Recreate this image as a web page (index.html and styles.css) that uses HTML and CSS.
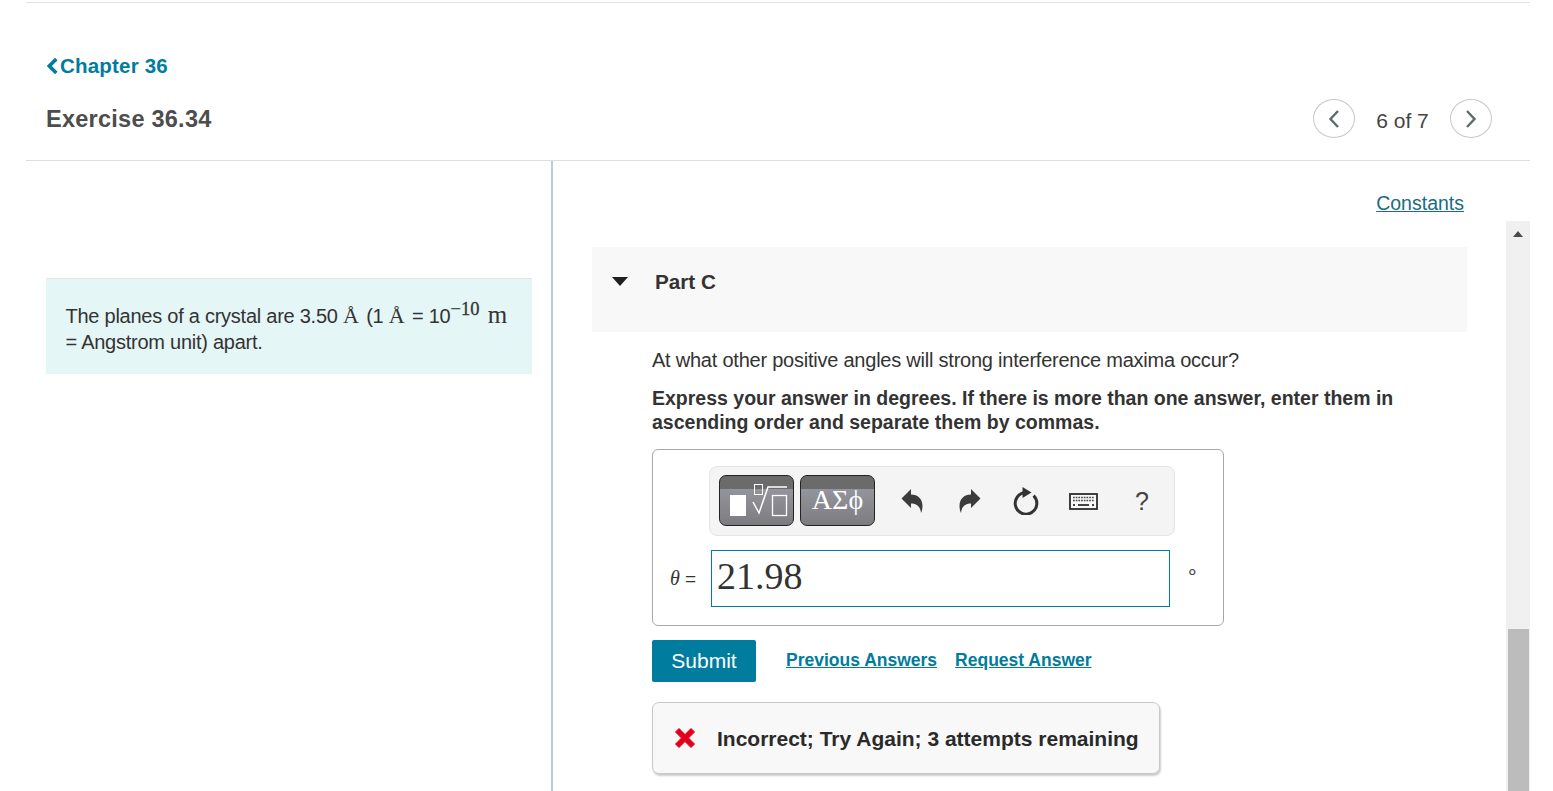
FILE: index.html
```html
<!DOCTYPE html>
<html>
<head>
    <title>Exercise 36.34</title>
    <link rel="stylesheet" href="styles.css">
</head>
<body>
    <div class="page">
        <header class="top">
            <a class="back" href="#">
                <svg width="14" height="18" viewBox="0 0 14 18"><path d="M10.300 2 L3.300 9 L10.300 16" fill="none" stroke="#007c9e" stroke-width="3.600"/></svg>
                Chapter 36
            </a>
            <div class="title-row">
                <h1>Exercise 36.34</h1>
                <div class="pager">
                    <span class="round">
                        <svg width="12" height="20" viewBox="0 0 12 20"><path d="M10 2 L2.500 10 L10 18" fill="none" stroke="#5f6b6b" stroke-width="2.400"/></svg>
                    </span>
                    <span class="count">6 of 7</span>
                    <span class="round">
                        <svg width="12" height="20" viewBox="0 0 12 20"><path d="M2 2 L9.500 10 L2 18" fill="none" stroke="#5f6b6b" stroke-width="2.400"/></svg>
                    </span>
                </div>
            </div>
        </header>

        <div class="columns">
            <aside class="left">
                <div class="intro">
                    The planes of a crystal are 3.50 <span class="tex angstrom">Å</span> (1 <span class="tex angstrom">Å</span> = 10<sup class="tex">−10</sup> <span class="tex unit">m</span>
                    = Angstrom unit) apart.
                </div>
            </aside>

            <main class="right">
                <div class="constants"><a href="#">Constants</a></div>
                <div class="scroll-area">
                    <div class="scroll-content">
                        <div class="part-head">
                            <span class="caret"></span>
                            <span class="part-name">Part C</span>
                        </div>
                        <div class="part-body">
                            <p class="question">At what other positive angles will strong interference maxima occur?</p>
                            <p class="instructions">Express your answer in degrees. If there is more than one answer, enter them in ascending order and separate them by commas.</p>

                            <div class="answer-box">
                                <div class="toolbar">
                                    <span class="tool-btn">
                                        <svg width="73" height="49" viewBox="1 1 73 49">
                                            <rect x="11" y="20" width="16" height="21" fill="#fff"/>
                                            <rect x="35.500" y="9.500" width="8" height="10" fill="none" stroke="#fff"/>
                                            <path d="M34 27 L40 38 L49 12 H68" fill="none" stroke="#fff" stroke-width="1.500"/>
                                            <rect x="53.500" y="20.500" width="14" height="20" fill="none" stroke="#fff" stroke-width="1.300"/>
                                        </svg>
                                    </span>
                                    <span class="tool-btn greek">ΑΣϕ</span>
                                    <svg class="tool-icon undo" width="22" height="26" viewBox="0 0 22 26"><path d="M0.500 10.500 L10 1 V6.500 C17 6.500 21.500 11 21.500 18 C21.500 20.500 21 23 20 25 C19.500 19.500 16.500 15.500 10 15.500 V20 Z" fill="#3c3c3c"/></svg>
                                    <svg class="tool-icon redo" width="22" height="26" viewBox="0 0 22 26"><path d="M21.500 10.500 L12 1 V6.500 C5 6.500 0.500 11 0.500 18 C0.500 20.500 1 23 2 25 C2.500 19.500 5.500 15.500 12 15.500 V20 Z" fill="#3c3c3c"/></svg>
                                    <svg class="tool-icon reset" width="27" height="28" viewBox="0 0 27 28"><path d="M13 5.500 A10.800 10.800 0 1 0 20.600 8.600" fill="none" stroke="#333" stroke-width="3"/><path d="M9.500 0 L18.500 5.500 L9.500 11 Z" fill="#333"/></svg>
                                    <svg class="tool-icon keys" width="29" height="17" viewBox="0 0 29 17">
                                        <rect x="1" y="1" width="27" height="15" fill="#f8f8f8" stroke="#2c2c2c" stroke-width="1.800"/>
                                        <path d="M4 4.500 H25 M4 7.500 H25" stroke="#444" stroke-width="1.500" stroke-dasharray="1.700 1"/>
                                        <path d="M4 12 H6 M9 12 H20 M23 12 H25" stroke="#444" stroke-width="1.800"/>
                                    </svg>
                                    <span class="help">?</span>
                                </div>
                                <div class="input-row">
                                    <span class="label"><i>θ</i> =</span>
                                    <div class="answer-input">21.98</div>
                                    <span class="degree">∘</span>
                                </div>
                            </div>

                            <div class="actions">
                                <button class="submit">Submit</button>
                                <a class="action-link first" href="#">Previous Answers</a>
                                <a class="action-link" href="#">Request Answer</a>
                            </div>

                            <div class="feedback">
                                <svg width="24" height="24" viewBox="0 0 24 24"><path d="M2.500 6 L6 2.500 L12 8.500 L18 2.500 L21.500 6 L15.500 12 L21.500 18 L18 21.500 L12 15.500 L6 21.500 L2.500 18 L8.500 12 Z" fill="#e2001a" stroke="#e2001a" stroke-linejoin="round"/></svg>
                                <span>Incorrect; Try Again; 3 attempts remaining</span>
                            </div>
                        </div>
                    </div>
                    <div class="scrollbar">
                        <div class="scroll-track"><span class="scroll-up"></span></div>
                        <div class="scroll-thumb"></div>
                    </div>
                </div>
            </main>
        </div>
    </div>
</body>
</html>
```

FILE: styles.css
```css
html, body {
    height: 100%;
}
body {
    font-family: "Liberation Sans", Arial, sans-serif;
    color: #333;
    background-color: #fff;
    margin: 0;
    overflow: hidden;
}
p {
    margin: 0;
}
a {
    color: #007c9e;
}
.page {
    width: 1504px;
    height: 791px;
    margin-left: 26px;
    border-top: 1px solid #e2e2e2;
    margin-top: 2px;
    overflow: hidden;
}
.top {
    height: 157px;
    padding: 0 38px 0 20px;
    border-bottom: 1px solid #dedede;
}
.back {
    display: flex;
    align-items: center;
    padding-top: 51px;
    height: 24px;
    font-size: 20.500px;
    font-weight: bold;
    color: #007c9e;
    text-decoration: none;
    letter-spacing: 0.200px;
}
.title-row {
    display: flex;
    justify-content: space-between;
    align-items: center;
    margin-top: 21px;
}
h1 {
    margin: 0;
    font-size: 23.500px;
    line-height: 30px;
    color: #4d4d4d;
    letter-spacing: 0.250px;
}
.pager {
    display: flex;
    align-items: center;
    font-size: 21px;
    color: #444;
}
.count {
    width: 95px;
    text-align: center;
    padding-top: 5px;
}
.round {
    width: 40px;
    height: 37px;
    border: 1px solid #c8c8c8;
    border-radius: 50%;
    display: flex;
    align-items: center;
    justify-content: center;
}
.columns {
    display: flex;
}
.left {
    width: 527px;
    height: 630px;
    border-right: 2px solid #b9cde0;
    padding: 117px 0 0 20px;
    box-sizing: border-box;
    flex: none;
}
.intro {
    width: 486px;
    height: 96px;
    box-sizing: border-box;
    background-color: #e5f6f7;
    border-top: 1px solid #dde8e8;
    padding: 23px 19px 0 19.500px;
    font-size: 20px;
    line-height: 26px;
    letter-spacing: -0.250px;
}
.tex {
    font-family: "Liberation Serif", serif;
    font-size: 22px;
    letter-spacing: 0;
}
.angstrom {
    margin-right: 2px;
}
sup.tex {
    font-size: 18.500px;
    line-height: 0;
    vertical-align: 8px;
    -webkit-text-stroke: 0.300px #333;
}
.unit {
    font-size: 25px;
    margin-left: 3px;
}
.right {
    flex: 1;
    min-width: 0;
}
.constants {
    height: 60px;
    padding: 29px 66px 0 0;
    box-sizing: border-box;
    text-align: right;
    font-size: 19.500px;
    line-height: 26px;
}
.constants a {
    color: #1b6b82;
}
.scroll-area {
    display: flex;
}
.scroll-content {
    flex: 1;
    padding: 26px 39px 0 39px;
}
.scrollbar {
    width: 24px;
    height: 570px;
    flex: none;
    display: flex;
    flex-direction: column;
    background-color: #f0f0f0;
}
.scroll-track {
    height: 408px;
    display: flex;
    justify-content: center;
    padding-top: 10px;
    box-sizing: border-box;
    flex: none;
}
.scroll-up {
    width: 0;
    height: 0;
    border-left: 5.500px solid transparent;
    border-right: 5.500px solid transparent;
    border-bottom: 6px solid #4c4c4c;
}
.scroll-thumb {
    flex: 1;
    margin: 0 1px 0 2px;
    background-color: #bcbcbc;
}
.part-head {
    height: 85px;
    background-color: #f8f8f8;
    display: flex;
    align-items: flex-start;
    padding: 22px 0 0 20px;
    box-sizing: border-box;
}
.caret {
    width: 0;
    height: 0;
    margin-top: 8px;
    border-left: 8px solid transparent;
    border-right: 8px solid transparent;
    border-top: 9px solid #1f1f1f;
}
.part-name {
    margin-left: 27px;
    font-size: 20.700px;
    line-height: 26px;
    font-weight: bold;
}
.part-body {
    padding: 14px 0 0 60px;
}
.question {
    font-size: 20px;
    line-height: 28px;
    letter-spacing: -0.230px;
}
.instructions {
    margin-top: 12px;
    width: 790px;
    font-size: 19.500px;
    line-height: 24px;
    font-weight: bold;
}
.answer-box {
    margin-top: 15px;
    width: 572px;
    height: 177px;
    box-sizing: border-box;
    border: 1px solid #a8a8a8;
    border-radius: 6px;
    padding: 16px 0 0 56px;
}
.toolbar {
    width: 466px;
    height: 70px;
    box-sizing: border-box;
    background-color: #f4f4f4;
    border: 1px solid #e4e4e4;
    border-radius: 8px;
    display: flex;
    align-items: center;
    padding-left: 9px;
    gap: 6px;
}
.tool-btn {
    width: 75px;
    height: 51px;
    margin-top: -1px;
    box-sizing: border-box;
    border: 1px solid #222;
    border-radius: 7px;
    background: linear-gradient(#6b6b6b 0, #6b6b6b 26%, #94949c 27%, #7c7c80 100%);
    display: flex;
    align-items: center;
    justify-content: center;
    overflow: hidden;
}
.greek {
    font-family: "Liberation Serif", serif;
    font-size: 28px;
    color: #fff;
    padding-bottom: 2px;
}
.tool-icon {
    flex: none;
}
.undo {
    margin-left: 20px;
}
.redo {
    margin-left: 30px;
}
.reset {
    margin-left: 26px;
}
.keys {
    margin-left: 23px;
}
.help {
    margin-left: 31px;
    font-size: 25px;
    color: #444;
}
.input-row {
    display: flex;
    align-items: center;
    margin: 14px 0 0 -40px;
}
.label {
    width: 42px;
    padding-left: 1px;
    box-sizing: border-box;
    font-size: 19px;
    color: #333;
}
.label i {
    font-family: "Liberation Serif", serif;
    font-size: 20px;
}
.answer-input {
    width: 459px;
    height: 57px;
    box-sizing: border-box;
    border: 1px solid #007c9e;
    padding-left: 5px;
    font-family: "Liberation Serif", serif;
    font-size: 38px;
    line-height: 51px;
    color: #333;
}
.degree {
    margin: -14px 0 0 16px;
    font-size: 20px;
    color: #444;
}
.actions {
    display: flex;
    align-items: center;
    margin-top: 14px;
    height: 42px;
}
.submit {
    width: 104px;
    height: 42px;
    background-color: #007c9e;
    border: none;
    border-radius: 2px;
    color: #fff;
    font-family: inherit;
    font-size: 21px;
    padding: 0;
}
.action-link {
    margin-left: 18px;
    font-size: 17.500px;
    font-weight: bold;
    margin-top: -2px;
}
.first {
    margin-left: 30px;
}
.feedback {
    margin-top: 20px;
    width: 508px;
    height: 72px;
    box-sizing: border-box;
    background-color: #f8f8f8;
    border: 1px solid #c8c8c8;
    border-radius: 7px;
    box-shadow: 1px 2px 2px rgba(0, 0, 0, 0.2);
    display: flex;
    align-items: center;
    padding: 2px 0 0 20px;
    gap: 20px;
    font-size: 21px;
    font-weight: bold;
    color: #2a2a2a;
}
.feedback svg {
    margin-top: -2px;
}
```
